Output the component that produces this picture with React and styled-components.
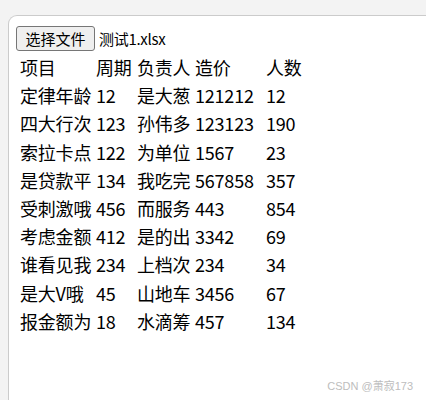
import React from "react";
import styled, { createGlobalStyle } from "styled-components";

const GlobalStyle = createGlobalStyle`
  html, body {
    margin: 0;
    padding: 0;
    background: #f3f3f3;
  }
  body {
    font-family: "Microsoft YaHei", "Noto Sans CJK SC", "Noto Sans", sans-serif;
  }
`;

const Frame = styled.div`
  height: 400px;
  padding: 15px 0 0 8px;
  box-sizing: border-box;
  overflow: hidden;
`;

const Page = styled.div`
  position: relative;
  height: 100%;
  background: #ffffff;
  border-top: 1px solid #cbcbcb;
  border-left: 1px solid #cbcbcb;
  border-top-left-radius: 9px;
  padding: 9px 0 0 7px;
  box-sizing: border-box;
  color: #000;
`;

const FileRow = styled.div`
  display: flex;
  align-items: center;
  gap: 4px;
  height: 26px;
`;

const FileButton = styled.button`
  height: 25px;
  width: 79px;
  padding: 0;
  font-family: "Microsoft YaHei", "Noto Sans CJK SC", sans-serif;
  font-size: 15px;
  color: #000;
  background: #efefef;
  border: 1px solid #767676;
  border-radius: 3px;
`;

const FileName = styled.span`
  font-size: 15px;
  letter-spacing: -0.3px;
`;

const Table = styled.table`
  border-collapse: separate;
  border-spacing: 0;
  margin-top: 2px;
  margin-left: 4px;
  font-size: 18px;
  table-layout: fixed;
`;

const Cell = styled.td`
  padding: 0;
  height: 28.2px;
  line-height: 28px;
  width: ${(p) => p.$w}px;
  white-space: nowrap;
  letter-spacing: -0.2px;
`;

const Watermark = styled.div`
  position: absolute;
  right: 13px;
  bottom: 7px;
  font-family: "Liberation Sans", "Noto Sans CJK SC", sans-serif;
  font-size: 11px;
  color: #bdbdbd;
`;

const widths = [76, 41, 58, 71, 40];

const rows = [
  ["项目", "周期", "负责人", "造价", "人数"],
  ["定律年龄", "12", "是大葱", "121212", "12"],
  ["四大行次", "123", "孙伟多", "123123", "190"],
  ["索拉卡点", "122", "为单位", "1567", "23"],
  ["是贷款平", "134", "我吃完", "567858", "357"],
  ["受刺激哦", "456", "而服务", "443", "854"],
  ["考虑金额", "412", "是的出", "3342", "69"],
  ["谁看见我", "234", "上档次", "234", "34"],
  ["是大V哦", "45", "山地车", "3456", "67"],
  ["报金额为", "18", "水滴筹", "457", "134"],
];

export default function App() {
  return (
    <>
      <GlobalStyle />
      <Frame>
        <Page>
          <FileRow>
            <FileButton>选择文件</FileButton>
            <FileName>测试1.xlsx</FileName>
          </FileRow>
          <Table>
            <tbody>
              {rows.map((r, i) => (
                <tr key={i}>
                  {r.map((c, j) => (
                    <Cell key={j} $w={widths[j]}>{c}</Cell>
                  ))}
                </tr>
              ))}
            </tbody>
          </Table>
          <Watermark>CSDN @萧寂173</Watermark>
        </Page>
      </Frame>
    </>
  );
}
